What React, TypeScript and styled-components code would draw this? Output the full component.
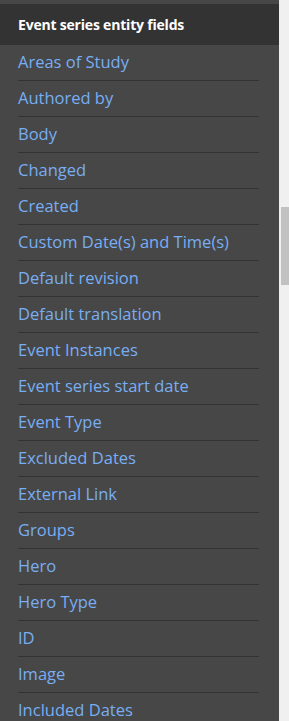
import styled, { createGlobalStyle } from "styled-components";

const GlobalStyle = createGlobalStyle`
  html, body {
    margin: 0;
    padding: 0;
    background: #f0f0f0;
    height: 100%;
    overflow: hidden;
  }
`;

const Page = styled.div`
  display: flex;
  align-items: flex-start;
  height: 721px;
  font-family: "Open Sans", "Noto Sans", sans-serif;
`;

const Sidebar = styled.nav`
  width: 279px;
  height: 100%;
  background: #474747;
  padding-top: 4px;
  box-sizing: border-box;
  overflow: hidden;
`;

const Header = styled.div`
  height: 41px;
  display: flex;
  align-items: center;
  padding: 0 0 1px 18px;
  box-sizing: border-box;
  background: #333333;
  color: #ffffff;
  font-weight: 700;
  font-size: 14px;
  letter-spacing: -0.2px;
`;

const List = styled.ul`
  list-style: none;
  margin: 0;
  padding: 0 20px 0 18px;
`;

const Item = styled.li`
  height: 35px;
  display: flex;
  align-items: center;
  padding-bottom: 2px;
  box-sizing: content-box;
  height: 33px;
  border-bottom: 1px solid #333333;
  color: #78aef3;
  font-size: 16.5px;
`;

const Track = styled.div`
  width: 10px;
  padding-top: 207px;
  display: flex;
  justify-content: flex-end;
`;

const Thumb = styled.div`
  width: 8px;
  height: 78px;
  background: #c1c1c1;
`;

const fields = [
  "Areas of Study",
  "Authored by",
  "Body",
  "Changed",
  "Created",
  "Custom Date(s) and Time(s)",
  "Default revision",
  "Default translation",
  "Event Instances",
  "Event series start date",
  "Event Type",
  "Excluded Dates",
  "External Link",
  "Groups",
  "Hero",
  "Hero Type",
  "ID",
  "Image",
  "Included Dates",
  "Language",
];

export default function App() {
  return (
    <>
      <GlobalStyle />
      <Page>
        <Sidebar>
          <Header>Event series entity fields</Header>
          <List>
            {fields.map((f) => (
              <Item key={f}>{f}</Item>
            ))}
          </List>
        </Sidebar>
        <Track>
          <Thumb />
        </Track>
      </Page>
    </>
  );
}
